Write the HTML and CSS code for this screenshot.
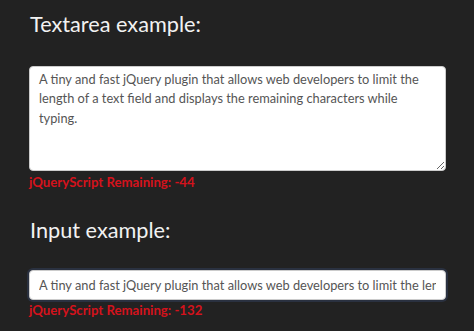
FILE: index.html
```html
<!DOCTYPE html>
<html>
<head>
<meta charset="utf-8">
<link rel="stylesheet" href="styles.css">
</head>
<body>
<main class="page">
  <section class="example">
    <h2 class="title">Textarea example:</h2>
    <textarea class="field field-area">A tiny and fast jQuery plugin that allows web developers to limit the length of a text field and displays the remaining characters while typing.</textarea>
    <div class="remaining">jQueryScript Remaining: -44</div>
  </section>
  <section class="example example-input">
    <h2 class="title">Input example:</h2>
    <input class="field field-input" type="text" value="A tiny and fast jQuery plugin that allows web developers to limit the length of a text field and displays the remaining characters while typing.">
    <div class="remaining">jQueryScript Remaining: -132</div>
  </section>
</main>
</body>
</html>
```

FILE: styles.css
```css
html, body {
  margin: 0;
  padding: 0;
  background: #222222;
}
.page {
  padding: 11px 28px 0 29px;
  font-family: Lato, "Open Sans", sans-serif;
}
.example {
  display: flex;
  flex-direction: column;
}
.example-input {
  margin-top: 25px;
}
.title {
  margin: 0 0 29px 1px;
  font-size: 21.7px;
  line-height: 26px;
  font-weight: 400;
  color: #f2f2f2;
}
.example-input .title {
  margin-bottom: 27px;
}
.field {
  box-sizing: border-box;
  width: 417px;
  margin: 0;
  font-family: Lato, "Open Sans", sans-serif;
  font-size: 12.8px;
  color: #555555;
  background: #ffffff;
  border: 1px solid #cccccc;
  border-radius: 4px;
  outline: none;
}
.field-area {
  display: block;
  height: 105px;
  padding: 3px 9px;
  line-height: 19.3px;
  resize: vertical;
}
.field-input {
  display: block;
  height: 30px;
  padding: 4px 9px;
  line-height: 20px;
  box-shadow: 0 0 0 2px #2a3140;
}
.remaining {
  margin-top: 1px;
  font-size: 13.2px;
  line-height: 20px;
  font-weight: 700;
  color: #d4121c;
}
.example-input .remaining {
  margin-top: 0;
}
```
